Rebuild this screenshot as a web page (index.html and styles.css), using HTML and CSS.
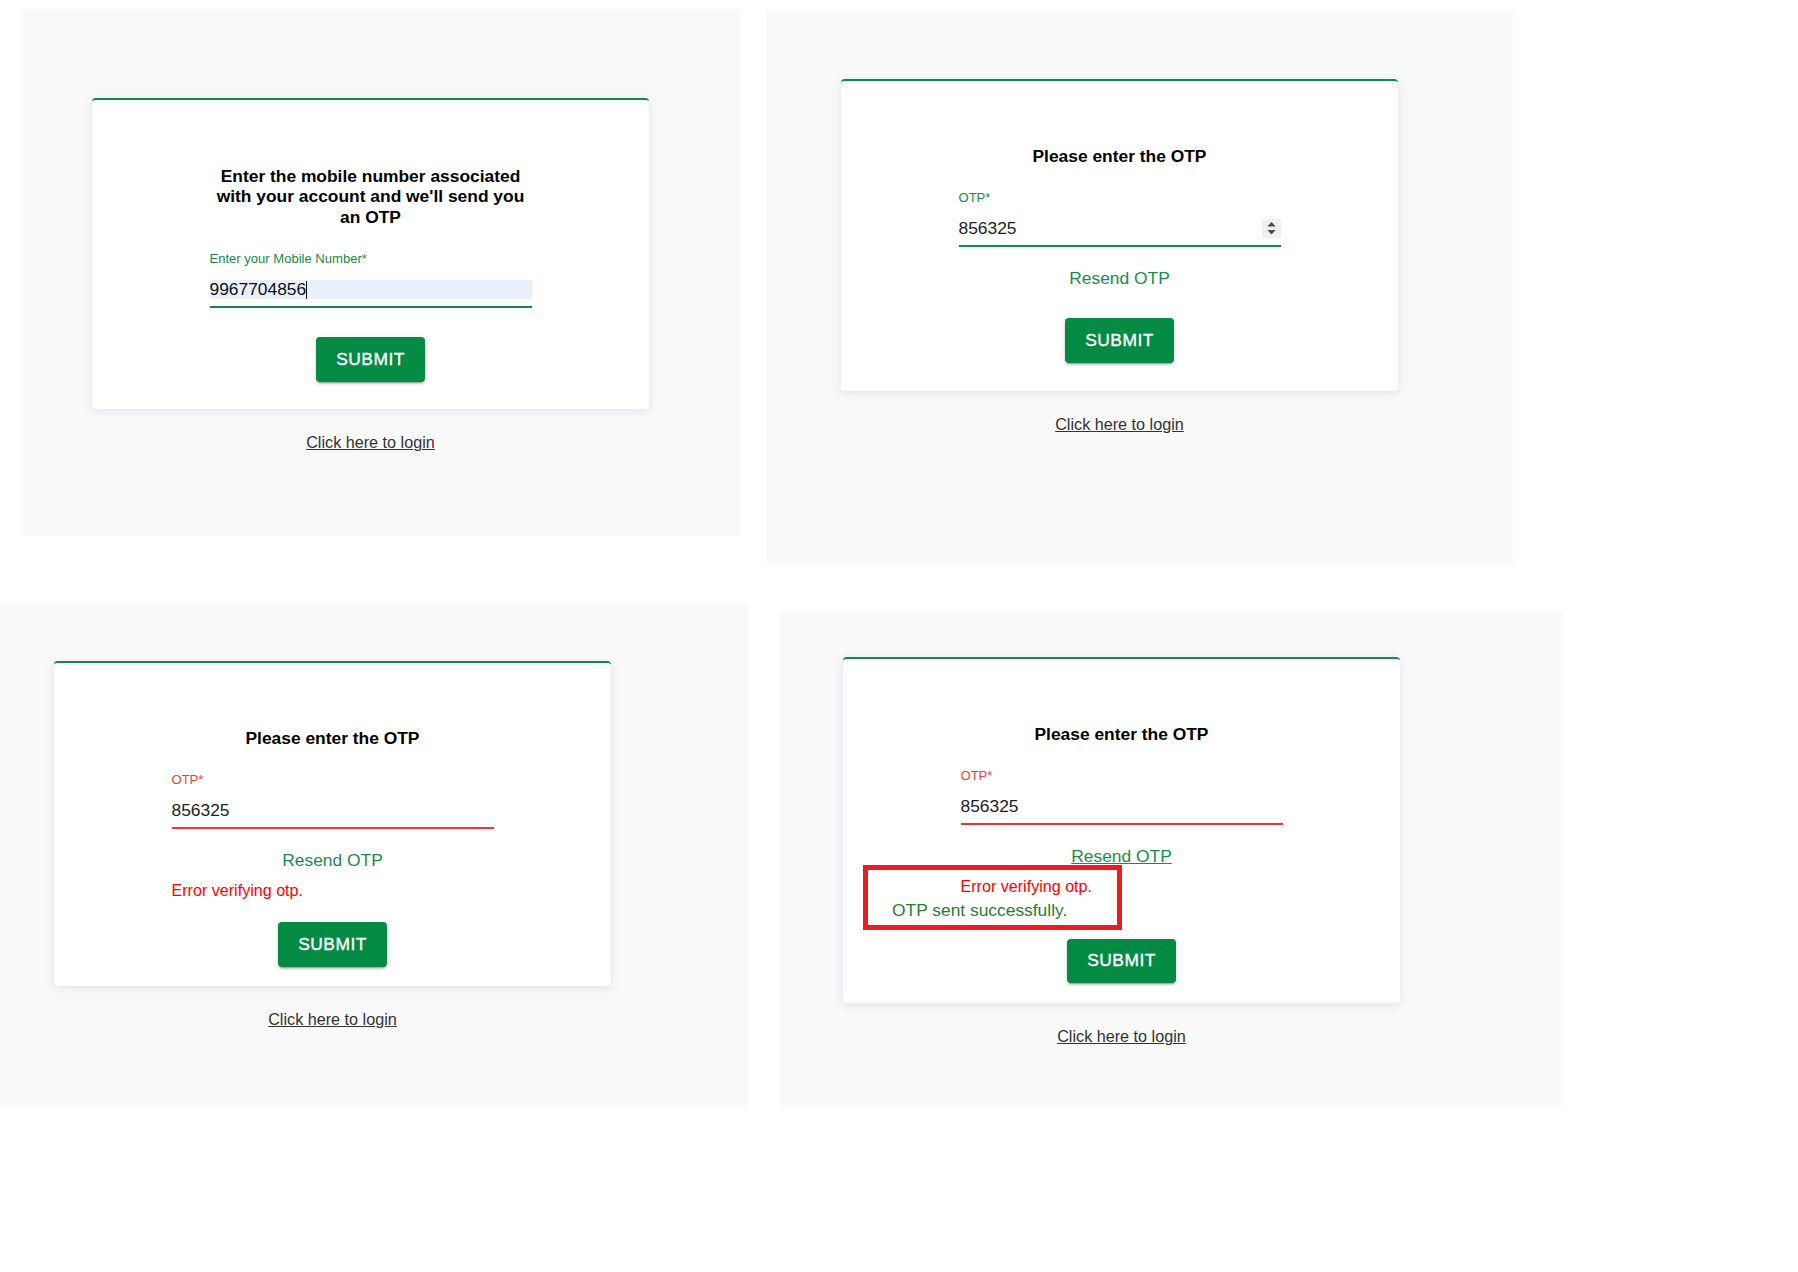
FILE: index.html
```html
<!DOCTYPE html>
<html lang="en">
<head>
<meta charset="utf-8">
<title>OTP screens</title>
<link rel="stylesheet" href="styles.css">
</head>
<body>
<div class="canvas">
  <div class="row row-top">
    <section class="panel panel-1">
      <div class="stack">
        <div class="card card-intro">
          <h2 class="title">Enter the mobile number associated with your account and we'll send you an OTP</h2>
          <div class="field">
            <div class="field-label">Enter your Mobile Number*</div>
            <div class="field-control">
              <div class="field-box autofill"><span class="value">9967704856</span><span class="caret"></span></div>
            </div>
          </div>
          <button class="btn" type="button">SUBMIT</button>
        </div>
        <a class="login-link" href="#">Click here to login</a>
      </div>
    </section>

    <section class="panel panel-2">
      <div class="stack">
        <div class="card">
          <h2 class="title">Please enter the OTP</h2>
          <div class="field">
            <div class="field-label">OTP*</div>
            <div class="field-control">
              <div class="field-box"><span class="value">856325</span>
                <svg class="spinner" viewBox="0 0 19 19" width="19" height="19" aria-hidden="true">
                  <rect width="19" height="19" fill="#f0f0f0"/>
                  <path d="M9.5 3 L13.6 7.6 L5.4 7.6 Z" fill="#4a4a4a"/>
                  <path d="M5.4 11 L13.6 11 L9.5 15.6 Z" fill="#4a4a4a"/>
                </svg>
              </div>
            </div>
          </div>
          <div class="resend">Resend OTP</div>
          <button class="btn" type="button">SUBMIT</button>
        </div>
        <a class="login-link" href="#">Click here to login</a>
      </div>
    </section>
  </div>

  <div class="row row-bottom">
    <section class="panel panel-3">
      <div class="stack">
        <div class="card card-error">
          <h2 class="title">Please enter the OTP</h2>
          <div class="field field--error">
            <div class="field-label">OTP*</div>
            <div class="field-control">
              <div class="field-box"><span class="value">856325</span></div>
            </div>
          </div>
          <div class="resend">Resend OTP</div>
          <div class="msg msg-error">Error verifying otp.</div>
          <button class="btn" type="button">SUBMIT</button>
        </div>
        <a class="login-link" href="#">Click here to login</a>
      </div>
    </section>

    <section class="panel panel-4">
      <div class="stack">
        <div class="card card-both">
          <h2 class="title">Please enter the OTP</h2>
          <div class="field field--error">
            <div class="field-label">OTP*</div>
            <div class="field-control">
              <div class="field-box"><span class="value">856325</span></div>
            </div>
          </div>
          <div class="resend resend--hover">Resend OTP</div>
          <div class="msg msg-error">Error verifying otp.</div>
          <div class="msg msg-success">OTP sent successfully.</div>
          <button class="btn" type="button">SUBMIT</button>
          <div class="annotation"></div>
        </div>
        <a class="login-link" href="#">Click here to login</a>
      </div>
    </section>
  </div>
</div>
</body>
</html>
```

FILE: styles.css
```css
html, body {
  margin: 0;
  padding: 0;
}

body {
  background: #ffffff;
  width: 1798px;
  height: 1272px;
  overflow: hidden;
  font-family: "Liberation Sans", Arial, sans-serif;
}

.canvas {
  display: flex;
  flex-direction: column;
}

.row {
  display: flex;
  align-items: flex-start;
}

.row-bottom {
  margin-top: 40px;
}

.panel {
  background: #f9f9fa;
  box-sizing: border-box;
}

.panel-1 {
  margin: 9px 0 0 21px;
  width: 719px;
  height: 527px;
  padding: 89px 0 0 71px;
}

.panel-2 {
  margin: 10px 0 0 26px;
  width: 747px;
  height: 554px;
  padding: 69px 0 0 75px;
}

.panel-3 {
  width: 748px;
  height: 501px;
  padding: 57px 0 0 54px;
}

.panel-4 {
  margin: 8px 0 0 32px;
  width: 783px;
  height: 493px;
  padding: 45px 0 0 63px;
}

.stack {
  width: 557px;
  display: flex;
  flex-direction: column;
  align-items: center;
}

.card {
  position: relative;
  width: 100%;
  box-sizing: border-box;
  background: #ffffff;
  border-top: 2px solid #12894a;
  border-radius: 4px;
  box-shadow: 0 2px 8px rgba(80, 90, 150, 0.14);
  padding: 64.5px 0 28px;
  display: flex;
  flex-direction: column;
  align-items: center;
}

.card-intro {
  padding-top: 65.8px;
  padding-bottom: 27.3px;
}

.card-error {
  padding-bottom: 19px;
}

.card-both {
  padding-bottom: 19.9px;
}

.title {
  margin: 0;
  width: 322px;
  font-size: 17.4px;
  line-height: 20.4px;
  font-weight: 700;
  text-align: center;
  color: #000000;
}

.field {
  width: 322px;
  margin-top: 23.6px;
}

.field-label {
  font-size: 13.05px;
  line-height: 16px;
  color: #168a4a;
}

.field-control {
  margin-top: 13.5px;
  padding-bottom: 7px;
  border-bottom: 2px solid #13894a;
  display: flex;
}

.field-box {
  flex: 1;
  height: 19px;
  display: flex;
  align-items: center;
  font-size: 17.4px;
  line-height: 19px;
  color: #212121;
}

.field-box.autofill {
  background: #e8f0fe;
  color: #111111;
}

.caret {
  width: 1px;
  height: 18px;
  background: #000000;
}

.spinner {
  margin-left: auto;
  display: block;
}

.field--error .field-label {
  color: #e9413b;
}

.field--error .field-control {
  border-bottom-color: #e53935;
}

.resend {
  margin-top: 20.8px;
  font-size: 17.4px;
  line-height: 20.4px;
  color: #1b8a4f;
}

.resend--hover {
  text-decoration: underline;
}

.msg {
  font-size: 16.1px;
  line-height: 20px;
}

.msg-error {
  width: 322px;
  margin-top: 10px;
  color: #ff0000;
}

.msg-success {
  align-self: flex-start;
  margin: 4px 0 0 49px;
  font-size: 17.4px;
  line-height: 20.4px;
  color: #2a7d33;
}

.btn {
  margin-top: 30.1px;
  width: 109px;
  height: 44.4px;
  padding: 0;
  border: none;
  border-radius: 4px;
  background: #038a43;
  color: #ffffff;
  font-family: "Liberation Sans", Arial, sans-serif;
  font-size: 17.4px;
  letter-spacing: 0.5px;
  -webkit-text-stroke: 0.35px #ffffff;
  box-shadow: 0 3px 1px -2px rgba(0, 0, 0, 0.2), 0 2px 2px 0 rgba(0, 0, 0, 0.14), 0 1px 5px 0 rgba(0, 0, 0, 0.12);
  cursor: pointer;
}

.card-intro .btn {
  margin-top: 29.3px;
}

.card-error .btn {
  margin-top: 22.1px;
}

.card-both .btn {
  margin-top: 18.1px;
}

.login-link {
  margin-top: 24.2px;
  font-size: 16.2px;
  line-height: 19px;
  color: #333333;
  text-decoration: underline;
}

.annotation {
  position: absolute;
  left: 20px;
  top: 206px;
  width: 259px;
  height: 65px;
  box-sizing: border-box;
  border: 5px solid #ed1c24;
  pointer-events: none;
}
```
